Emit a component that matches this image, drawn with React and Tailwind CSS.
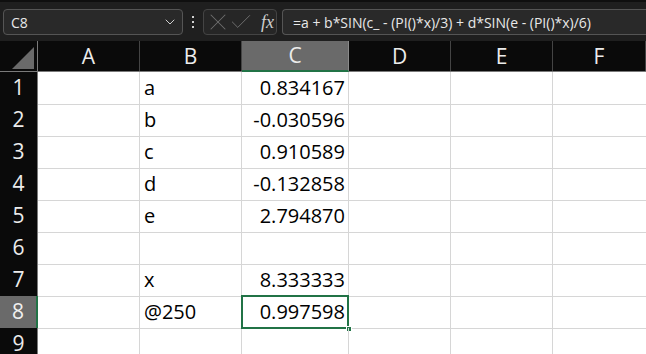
import { ChevronDown, X, Check } from 'lucide-react';

const cols = ['A', 'B', 'C', 'D', 'E', 'F'];

const rows = [
  { n: 1, b: 'a', c: '0.834167' },
  { n: 2, b: 'b', c: '-0.030596' },
  { n: 3, b: 'c', c: '0.910589' },
  { n: 4, b: 'd', c: '-0.132858' },
  { n: 5, b: 'e', c: '2.794870' },
  { n: 6, b: '', c: '' },
  { n: 7, b: 'x', c: '8.333333' },
  { n: 8, b: '@250', c: '0.997598' },
  { n: 9, b: '', c: '' },
];

const grid = 'grid grid-cols-[38px_102px_102px_107px_102px_102px_1fr]';

export default function App() {
  return (
    <div className="w-[646px] h-[354px] overflow-hidden bg-white font-['Open_Sans','Noto_Sans',sans-serif]">
      {/* formula bar */}
      <div className="h-[41px] bg-[#1f1f1f] border-t-2 border-[#0f0f0f] flex items-start pt-[7px] pl-[3px]">
        <div className="w-[180px] h-[26px] rounded-[4px] border border-[#555] bg-[#292929] flex items-center justify-between pl-[7px] pr-[4px] text-[14px] text-[#e8e8e8]">
          <span>C8</span>
          <ChevronDown size={16} strokeWidth={1.5} className="text-[#cfcfcf]" />
        </div>
        <div className="w-[20px] h-[26px] flex flex-col items-center justify-center gap-[3px]">
          <span className="w-[2px] h-[2px] bg-[#d0d0d0]" />
          <span className="w-[2px] h-[2px] bg-[#d0d0d0]" />
          <span className="w-[2px] h-[2px] bg-[#d0d0d0]" />
        </div>
        <div className="w-[74px] h-[26px] rounded-[4px] border border-[#444] bg-[#262626] flex items-center overflow-hidden">
          <X size={28} strokeWidth={0.9} className="text-[#6e6e6e] shrink-0" />
          <Check size={26} strokeWidth={0.9} className="text-[#6e6e6e] shrink-0 -ml-[4px]" />
          <span className="ml-[7px] font-['Liberation_Serif',serif] italic text-[18px] text-[#cfcfcf] leading-none">fx</span>
        </div>
        <div className="ml-[5px] flex-1 h-[26px] rounded-l-[4px] border border-r-0 border-[#555] bg-[#292929] flex items-center pl-[10px] text-[14px] text-[#e8e8e8] whitespace-nowrap">
          =a + b*SIN(c_ - (PI()*x)/3) + d*SIN(e - (PI()*x)/6)
        </div>
      </div>

      {/* column headers */}
      <div className={`${grid} h-[31px] bg-[#0a0a0a] border-b border-[#7a7a7a] text-[#ececec] text-[21px]`}>
        <div className="border-r border-[#7a7a7a] flex items-end justify-end pr-[3px] pb-[2px]">
          <svg width="22" height="22" viewBox="0 0 22 22">
            <polygon points="0,22 22,22 22,0" fill="#6a6a6a" />
          </svg>
        </div>
        {cols.map((c) => (
          <div
            key={c}
            className={
              c === 'C'
                ? 'bg-[#6a6a6a] border-b-2 border-[#217346] border-r border-r-[#8a8a8a] flex items-center justify-center leading-none -mb-px'
                : 'border-r border-[#444] flex items-center justify-center leading-none'
            }
          >
            {c}
          </div>
        ))}
      </div>

      {/* rows */}
      {rows.map((r) => (
        <div key={r.n} className={`${grid} h-[32px] text-[20px] text-black`}>
          <div
            className={
              r.n === 8
                ? 'bg-[#6a6a6a] border-r-2 border-r-[#217346] border-b border-b-[#8a8a8a] text-[#f0f0f0] flex items-center justify-center text-[21px]'
                : 'bg-[#0a0a0a] border-r border-r-[#7a7a7a] border-b border-b-[#444] text-[#ececec] flex items-center justify-center text-[21px]'
            }
          >
            {r.n}
          </div>
          <div className="border-r border-b border-[#d6d6d6]" />
          <div className="border-r border-b border-[#d6d6d6] flex items-center pl-[4px]">{r.b}</div>
          <div className="relative border-r border-b border-[#d6d6d6] flex items-center justify-end pr-[3px]">
            {r.c}
            {r.n === 8 && (
              <>
                <div className="absolute -left-px -top-px -right-px -bottom-px border-2 border-[#217346]" />
                <div className="absolute -right-[4px] -bottom-[4px] w-[6px] h-[6px] bg-[#217346] border border-white" />
              </>
            )}
          </div>
          <div className="border-r border-b border-[#d6d6d6]" />
          <div className="border-r border-b border-[#d6d6d6]" />
          <div className="border-b border-[#d6d6d6]" />
        </div>
      ))}
    </div>
  );
}
